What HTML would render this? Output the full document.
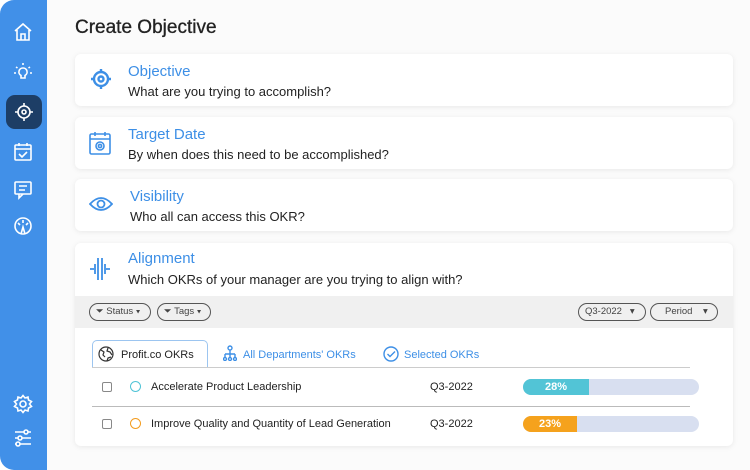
<!DOCTYPE html>
<html><head><style>
*{box-sizing:border-box;margin:0;padding:0}
body{width:750px;height:470px;background:#fff;font-family:"Liberation Sans",sans-serif;position:relative;overflow:hidden}
.side{position:absolute;left:0;top:0;width:47px;height:470px;background:#4190e8;border-radius:14px 0 0 14px}
.side svg{position:absolute;left:13px}
.sel{position:absolute;left:6px;top:95px;width:36px;height:34px;background:#1d3e66;border-radius:9px}
.main{position:absolute;left:47px;top:0;width:703px;height:470px;background:#fbfbfb}
h1{position:absolute;left:75px;top:17px;font-size:19px;font-weight:normal;color:#222;-webkit-text-stroke:.3px #222}
.card{position:absolute;left:75px;width:658px;background:#fff;border-radius:6px;box-shadow:0 1px 6px rgba(0,0,0,.08)}
.t{position:absolute;font-size:15px;color:#3d8fe6}
.s{position:absolute;font-size:13px;color:#222}
.ic{position:absolute}
.bar{position:absolute;left:0;top:53px;width:658px;height:32px;background:#f0f0f0}
.pill{position:absolute;height:18px;border:1px solid #555;border-radius:9px;font-size:9.5px;color:#444;line-height:16px;padding-left:6px}
.tab{position:absolute;font-size:11px;color:#3d8fe6}
.row{position:absolute;left:18px;width:598px;height:37px;font-size:11px;color:#222}
.pb{position:absolute;left:430px;top:10px;width:176px;height:16px;border-radius:8px;background:#d8dff0;overflow:hidden}
.pb div{height:16px;color:#fff;font-size:11px;line-height:16px;text-align:center;font-weight:bold}
.cb{position:absolute;left:9px;top:13px;width:10px;height:10px;border:1px solid #888;border-radius:2px}
.dot{position:absolute;left:37px;top:12px;width:11px;height:11px;border:1.5px solid;border-radius:50%}
</style></head><body>
<div class="side">
<svg style="top:22px" width="20" height="20" viewBox="0 0 20 20" fill="none" stroke="#fff" stroke-width="1.6"><path d="M2 9L10 2l8 7M4 8v10h12V8M8 18v-6h4v6"/></svg>
<svg style="top:62px" width="20" height="20" viewBox="0 0 20 20" fill="none" stroke="#fff" stroke-width="1.6"><path d="M10 6a4 4 0 0 0-2 7.5V16h4v-2.5A4 4 0 0 0 10 6zM10 1v2M3 5l1.5 1M17 5l-1.5 1M1 11h2M17 11h2"/></svg>
<div class="sel"></div>
<svg style="top:102px;left:14px" width="20" height="20" viewBox="0 0 20 20" fill="none" stroke="#fff" stroke-width="1.6"><circle cx="10" cy="10" r="6"/><circle cx="10" cy="10" r="2"/><path d="M10 1v3M10 16v3M1 10h3M16 10h3"/></svg>
<svg style="top:142px" width="20" height="20" viewBox="0 0 20 20" fill="none" stroke="#fff" stroke-width="1.6"><rect x="2" y="3" width="16" height="15" rx="1"/><path d="M2 7h16M6 1v3M14 1v3M6 12l3 3 5-5"/></svg>
<svg style="top:180px" width="20" height="20" viewBox="0 0 20 20" fill="none" stroke="#fff" stroke-width="1.6"><rect x="2" y="2" width="16" height="12" rx="1"/><path d="M6 14v4l4-4M6 6h8M6 10h6"/></svg>
<svg style="top:216px" width="20" height="20" viewBox="0 0 20 20" fill="none" stroke="#fff" stroke-width="1.6"><circle cx="10" cy="10" r="8"/><path d="M10 4v3M5 7l2 2M15 7l-2 2M8 18l2-7 2 7"/></svg>
<svg style="top:394px" width="20" height="20" viewBox="0 0 20 20" fill="none" stroke="#fff" stroke-width="1.6"><circle cx="10" cy="10" r="3"/><path d="M10 1.5l2 2.5 3-1 .5 3 3 1.5-2 2.5 2 2.5-3 1.5-.5 3-3-1-2 2.5-2-2.5-3 1-.5-3-3-1.5 2-2.5-2-2.5 3-1.5.5-3 3 1z"/></svg>
<svg style="top:428px" width="20" height="20" viewBox="0 0 20 20" fill="none" stroke="#fff" stroke-width="1.6"><path d="M2 4h16M2 10h16M2 16h16"/><circle cx="13" cy="4" r="2" fill="#4190e8"/><circle cx="7" cy="10" r="2" fill="#4190e8"/><circle cx="5" cy="16" r="2" fill="#4190e8"/></svg>
</div>
<div class="main"></div>
<h1>Create Objective</h1>

<div class="card" style="top:54px;height:52px">
<svg class="ic" style="left:15px;top:14px" width="22" height="22" viewBox="0 0 22 22" fill="none" stroke="#3d8fe6" stroke-width="2.4"><circle cx="11" cy="11" r="7"/><circle cx="11" cy="11" r="2.5"/><path d="M11 1v3M11 18v3M1 11h3M18 11h3"/></svg>
<div class="t" style="left:53px;top:9px">Objective</div>
<div class="s" style="left:53px;top:30px">What are you trying to accomplish?</div></div>

<div class="card" style="top:117px;height:52px">
<svg class="ic" style="left:14px;top:14px" width="22" height="24" viewBox="0 0 22 24" fill="none" stroke="#3d8fe6" stroke-width="1.6"><rect x="1" y="3" width="20" height="20" rx="1.5"/><path d="M1 8h20M6 1v4M16 1v4"/><circle cx="11" cy="15" r="4"/><circle cx="11" cy="15" r="1.6"/></svg>
<div class="t" style="left:53px;top:9px">Target Date</div>
<div class="s" style="left:53px;top:30px">By when does this need to be accomplished?</div></div>

<div class="card" style="top:179px;height:52px">
<svg class="ic" style="left:14px;top:17px" width="24" height="16" viewBox="0 0 24 16" fill="none" stroke="#3d8fe6" stroke-width="1.8"><path d="M1 8Q12-4 23 8Q12 20 1 8z"/><circle cx="12" cy="8" r="3.5"/></svg>
<div class="t" style="left:55px;top:9px">Visibility</div>
<div class="s" style="left:55px;top:30px">Who all can access this OKR?</div></div>

<div class="card" style="top:243px;height:203px">
<svg class="ic" style="left:14px;top:13px" width="22" height="26" viewBox="0 0 22 26" fill="none" stroke="#3d8fe6" stroke-width="1.8"><path d="M1 13h4M17 13h4M6 8v10M16 8v10M9 2v22M13 2v22"/></svg>
<div class="t" style="left:53px;top:7px">Alignment</div>
<div class="s" style="left:53px;top:29px">Which OKRs of your manager are you trying to align with?</div>
<div class="bar">
<div class="pill" style="left:14px;top:7px;width:62px">⏷ Status ▾</div>
<div class="pill" style="left:82px;top:7px;width:54px">⏷ Tags ▾</div>
<div class="pill" style="left:503px;top:7px;width:68px">Q3-2022 &nbsp;&nbsp;▾</div>
<div class="pill" style="left:575px;top:7px;width:68px;padding-left:14px">Period &nbsp;&nbsp;&nbsp;▾</div>
</div>
<div style="position:absolute;left:17px;top:97px;width:116px;height:27px;border:1px solid #9cc5f0;border-bottom:none;border-radius:5px 5px 0 0;background:#fff"></div>
<svg class="ic" style="left:23px;top:103px" width="16" height="16" viewBox="0 0 16 16" fill="none" stroke="#333" stroke-width="1.2"><circle cx="8" cy="8" r="7"/><path d="M3 4l3 2-1 3 2 2M10 2l-1 3 3 1 2 3M9 15l1-3 3-1"/></svg>
<div class="tab" style="left:46px;top:106px;color:#222">Profit.co OKRs</div>
<svg class="ic" style="left:148px;top:102px" width="14" height="16" viewBox="0 0 14 16" fill="none" stroke="#3d8fe6" stroke-width="1.4"><circle cx="7" cy="3" r="2"/><path d="M7 5v4M2 9h10M2 9v3M7 9v3M12 9v3"/><circle cx="2" cy="14" r="1.5"/><circle cx="7" cy="14" r="1.5"/><circle cx="12" cy="14" r="1.5"/></svg>
<div class="tab" style="left:168px;top:106px">All Departments' OKRs</div>
<svg class="ic" style="left:308px;top:103px" width="16" height="16" viewBox="0 0 16 16" fill="none" stroke="#3d8fe6" stroke-width="1.4"><circle cx="8" cy="8" r="7"/><path d="M4.5 8l2.5 2.5 5-5"/></svg>
<div class="tab" style="left:329px;top:106px">Selected OKRs</div>
<div style="position:absolute;left:17px;top:124px;width:598px;height:1px;background:#ccc"></div>
<div class="row" style="top:126px"><div class="cb"></div><div class="dot" style="border-color:#4fc3d6"></div><div style="position:absolute;left:58px;top:12px">Accelerate Product Leadership</div><div style="position:absolute;left:337px;top:12px">Q3-2022</div><div class="pb"><div style="width:66px;background:#52c4d6">28%</div></div></div>
<div style="position:absolute;left:17px;top:163px;width:598px;height:1px;background:#bbb"></div>
<div class="row" style="top:163px"><div class="cb"></div><div class="dot" style="border-color:#f39c1f"></div><div style="position:absolute;left:58px;top:12px">Improve Quality and Quantity of Lead Generation</div><div style="position:absolute;left:337px;top:12px">Q3-2022</div><div class="pb"><div style="width:54px;background:#f5a21d">23%</div></div></div>
</div>
</body></html>
